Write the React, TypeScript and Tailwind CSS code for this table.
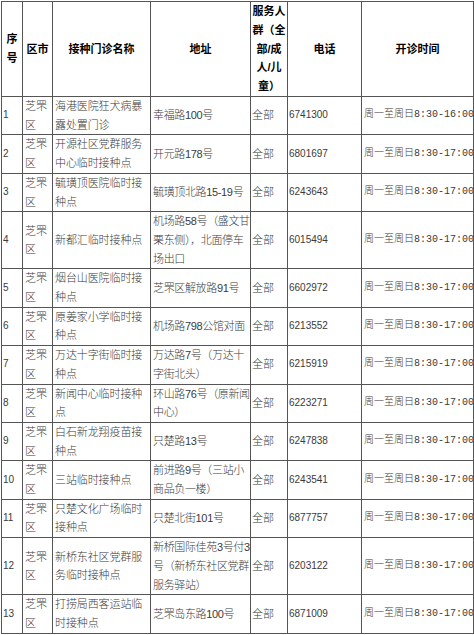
type Row = {
    no: string
    name: string[]
    addr: string[]
    phone: string
    time: string
}

const rows: Row[] = [
    { no: "1", name: ["海港医院狂犬病暴", "露处置门诊"], addr: ["幸福路100号"], phone: "6741300", time: "周一至周日8:30-16:00" },
    { no: "2", name: ["开源社区党群服务", "中心临时接种点"], addr: ["开元路178号"], phone: "6801697", time: "周一至周日8:30-17:00" },
    { no: "3", name: ["毓璜顶医院临时接", "种点"], addr: ["毓璜顶北路15-19号"], phone: "6243643", time: "周一至周日8:30-17:00" },
    { no: "4", name: ["新都汇临时接种点"], addr: ["机场路58号（盛文甘", "栗东侧），北面停车", "场出口"], phone: "6015494", time: "周一至周日8:30-17:00" },
    { no: "5", name: ["烟台山医院临时接", "种点"], addr: ["芝罘区解放路91号"], phone: "6602972", time: "周一至周日8:30-17:00" },
    { no: "6", name: ["原姜家小学临时接", "种点"], addr: ["机场路798公馆对面"], phone: "6213552", time: "周一至周日8:30-17:00" },
    { no: "7", name: ["万达十字街临时接", "种点"], addr: ["万达路7号（万达十", "字街北头）"], phone: "6215919", time: "周一至周日8:30-17:00" },
    { no: "8", name: ["新闻中心临时接种", "点"], addr: ["环山路76号（原新闻", "中心）"], phone: "6223271", time: "周一至周日8:30-17:00" },
    { no: "9", name: ["白石新龙翔疫苗接", "种点"], addr: ["只楚路13号"], phone: "6247838", time: "周一至周日8:30-17:00" },
    { no: "10", name: ["三站临时接种点"], addr: ["前进路9号（三站小", "商品负一楼）"], phone: "6243541", time: "周一至周日8:30-17:00" },
    { no: "11", name: ["只楚文化广场临时", "接种点"], addr: ["只楚北街101号"], phone: "6877757", time: "周一至周日8:30-17:00" },
    { no: "12", name: ["新桥东社区党群服", "务临时接种点"], addr: ["新桥国际佳苑3号付3", "号（新桥东社区党群", "服务驿站）"], phone: "6203122", time: "周一至周日8:30-17:00" },
    { no: "13", name: ["打捞局西客运站临", "时接种点"], addr: ["芝罘岛东路100号"], phone: "6871009", time: "周一至周日8:30-17:00" },
]

function Lines({ lines }: { lines: string[] }) {
    return (
        <>
            {lines.map((l, i) => (
                <div key={i} className="whitespace-nowrap">{l}</div>
            ))}
        </>
    )
}

export default function App() {
    const th = "border border-[#555] h-[95px] p-0 align-middle text-center font-bold text-black"
    const td = "border border-[#555] p-0 align-middle text-left overflow-hidden"

    return (
        <div className="w-[474px] h-[635px] bg-white overflow-hidden pt-[1px] pl-[1px]">
            <table className="table-fixed border-collapse w-[472px] text-[11px] leading-[18.7px] font-['Liberation_Sans','Noto_Sans_CJK_SC',sans-serif] text-[#3a3a3a]">
                <colgroup>
                    <col className="w-[21px]" />
                    <col className="w-[30px]" />
                    <col className="w-[98px]" />
                    <col className="w-[100px]" />
                    <col className="w-[37px]" />
                    <col className="w-[74px]" />
                    <col className="w-[112px]" />
                </colgroup>
                <thead>
                    <tr>
                        <th className={th}><Lines lines={["序", "号"]} /></th>
                        <th className={th}>区市</th>
                        <th className={th}>接种门诊名称</th>
                        <th className={th}>地址</th>
                        <th className={th}><Lines lines={["服务人", "群（全", "部/成", "人/儿", "童）"]} /></th>
                        <th className={th}>电话</th>
                        <th className={th}>开诊时间</th>
                    </tr>
                </thead>
                <tbody className="font-light">
                    {rows.map((r) => (
                        <tr key={r.no}>
                            <td className={`${td} pl-[1px] text-[10px]`}>{r.no}</td>
                            <td className={`${td} pl-[2px]`}><Lines lines={["芝罘", "区"]} /></td>
                            <td className={`${td} pl-[2px] tracking-[-0.1px]`}><Lines lines={r.name} /></td>
                            <td className={`${td} pl-[2px] tracking-[-0.35px]`}><Lines lines={r.addr} /></td>
                            <td className={`${td} pl-[1px]`}>全部</td>
                            <td className={`${td} pl-[1px] text-[10px]`}>{r.phone}</td>
                            <td className={`${td} pl-[2px] whitespace-nowrap text-[10px] font-['Liberation_Mono','Noto_Sans_CJK_SC',monospace]`}>{r.time}</td>
                        </tr>
                    ))}
                </tbody>
            </table>
        </div>
    )
}
